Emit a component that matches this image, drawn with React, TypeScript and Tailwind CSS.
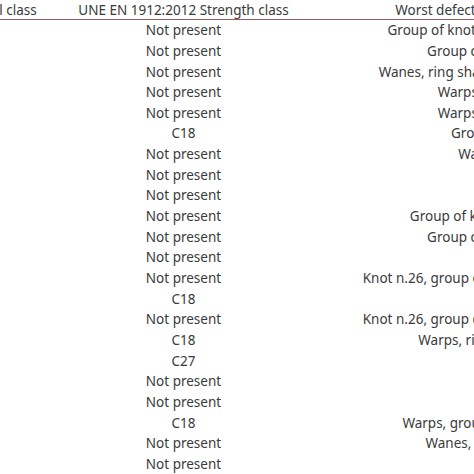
import React from "react";

const rows: [string, string][] = [
  ["Not present", "Group of knots, wanes, warp n.4"],
  ["Not present", "Group of knots n.31"],
  ["Not present", "Wanes, ring shakes, group of knots"],
  ["Not present", "Warps, wane n.7"],
  ["Not present", "Warps, wane n.9"],
  ["C18", "Group n.2, 8"],
  ["Not present", "Warps n.3"],
  ["Not present", ""],
  ["Not present", ""],
  ["Not present", "Group of knots n.18, n.19"],
  ["Not present", "Group of knots n.15"],
  ["Not present", ""],
  ["Not present", "Knot n.26, group of knots, wanes, warps"],
  ["C18", ""],
  ["Not present", "Knot n.26, group of knots, wanes, warps"],
  ["C18", "Warps, ring shakes n.2"],
  ["C27", ""],
  ["Not present", ""],
  ["Not present", ""],
  ["C18", "Warps, group of knots, n.11"],
  ["Not present", "Wanes, fissures n.15"],
  ["Not present", ""],
];

export default function App() {
  return (
    <div
      className="w-[474px] h-[474px] overflow-hidden bg-white text-[#3a3a3a] text-[13.5px]"
      style={{ fontFamily: '"Noto Sans", "Liberation Sans", sans-serif' }}
    >
      <div className="ml-[-60px] w-[735px]">
        <div className="grid grid-cols-[122px_243px_370px] h-[20px] items-center border-b border-[#9b5b5b]">
          <div className="flex justify-center whitespace-nowrap">Visual class</div>
          <div className="flex justify-center whitespace-nowrap">UNE EN 1912:2012 Strength class</div>
          <div className="flex justify-center whitespace-nowrap">Worst defects observed in bar</div>
        </div>
        {rows.map((r, i) => (
          <div key={i} className="grid grid-cols-[122px_243px_370px] h-[20.67px] items-center">
            <div />
            <div className="flex justify-center whitespace-nowrap">{r[0]}</div>
            <div className="flex justify-center whitespace-nowrap">{r[1]}</div>
          </div>
        ))}
      </div>
    </div>
  );
}
